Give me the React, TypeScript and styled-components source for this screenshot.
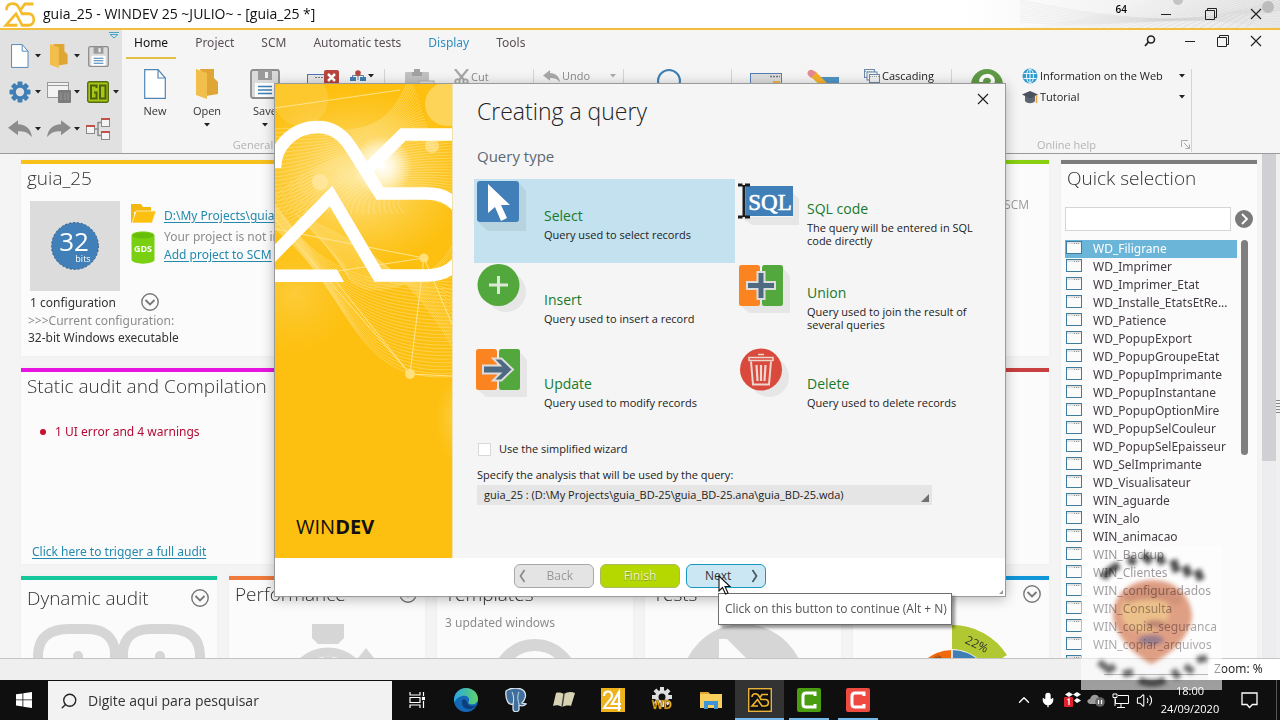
import React from "react";
import styled, { createGlobalStyle, css } from "styled-components";
import { Search, ChevronUp, Mic, Volume2 } from "lucide-react";

const ui = `"Open Sans", "Noto Sans", sans-serif`;
const dense = `"Noto Sans", "Open Sans", sans-serif`;

const Global = createGlobalStyle`
  * { box-sizing: border-box; }
  html, body { margin: 0; height: 100%; }
  body { font-family: ${ui}; font-size: 12px; color: #333; overflow: hidden; background: #f5f5f5; }
  button { font: inherit; color: inherit; background: none; border: 0; padding: 0; text-align: left; }
  h1, h2, p, ul { margin: 0; padding: 0; font-weight: 400; }
  ul { list-style: none; }
  svg { display: block; flex: none; }
`;

const Page = styled.div`
  position: relative;
  display: flex;
  flex-direction: column;
  height: 100vh;
`;

/* ---------- title bar ---------- */

const TitleBar = styled.header`
  display: flex;
  align-items: center;
  height: 30px;
  padding: 0 18px 0 3px;
  background: #fff;
  border-bottom: 2px solid #f3bd3f;
  position: relative;
`;

const TitleText = styled.h1`
  flex: 1;
  margin-left: 8px;
  font-size: 14px;
  line-height: 20px;
  color: #111;
`;

const TitleMesh = styled.div`
  position: absolute;
  right: 0;
  top: 0;
`;

const Bits = styled.span`
  position: relative;
  align-self: flex-start;
  margin: 1px 33px 0 0;
  font-size: 10px;
  line-height: 16px;
  font-weight: 600;
  color: #000;
`;

const WindowButtons = styled.div<{ $gap: number }>`
  position: relative;
  display: flex;
  align-items: center;
  gap: ${(p) => p.$gap}px;
  color: #222;
`;

const IconButton = styled.button`
  display: flex;
  align-items: center;
  justify-content: center;
`;

const Mirror = styled.span`
  display: flex;
  transform: scaleX(-1);
`;

/* ---------- ribbon ---------- */

const Ribbon = styled.div`
  display: flex;
  height: 124px;
  border-bottom: 1px solid #9a9a9a;
  background: #f5f5f5;
`;

const QuickTools = styled.div`
  position: relative;
  width: 122px;
  background: #e1e1e1;
  padding: 8px 2px 6px 8px;
  display: grid;
  grid-template-columns: 39px 39px 34px;
  grid-template-rows: repeat(3, 1fr);
  align-items: center;
`;

const QuickTool = styled.button`
  display: grid;
  grid-template-columns: 24px 6px;
  justify-items: center;
  align-items: center;
  gap: 3px;
`;

const PinMark = styled.span`
  position: absolute;
  right: 3px;
  top: 2px;
`;

const RibbonMain = styled.div`
  flex: 1;
  display: flex;
  flex-direction: column;
`;

const TabRow = styled.nav`
  display: flex;
  align-items: flex-start;
  padding: 0 18px 0 4px;
`;

const Tab = styled.a<{ $tone?: "active" | "link" }>`
  padding: 4px 8px 5px;
  margin-right: 11px;
  font-family: ${dense};
  font-size: 12px;
  line-height: 18px;
  text-decoration: none;
  color: ${(p) => (p.$tone === "active" ? "#111" : p.$tone === "link" ? "#2f8fc0" : "#5a4f55")};
  border-bottom: 2px solid ${(p) => (p.$tone === "active" ? "#e2c044" : "transparent")};
`;

const Spring = styled.div`
  flex: 1;
`;

const TabTools = styled.div`
  display: flex;
  align-items: center;
  height: 22px;
  gap: 28px;
`;

const GroupRow = styled.div`
  flex: 1;
  display: flex;
  padding-top: 10px;
`;

const Group = styled.section<{ $w: number }>`
  display: flex;
  flex-direction: column;
  width: ${(p) => p.$w}px;
  border-right: 1px solid #d4d4d4;
  margin-bottom: 1px;
`;

const GroupBody = styled.div<{ $pad?: number; $gap?: number }>`
  flex: 1;
  display: flex;
  align-items: flex-start;
  padding-left: ${(p) => p.$pad ?? 7}px;
  gap: ${(p) => p.$gap ?? 0}px;
`;

const GroupLabel = styled.div`
  text-align: center;
  color: #b4b4b4;
  font-size: 11px;
  line-height: 15px;
`;

const LabelRow = styled.div`
  position: relative;
  padding-right: 10px;
`;

const Launcher = styled.button`
  position: absolute;
  right: 1px;
  bottom: 3px;
`;

const ExtraTools = styled.div`
  display: flex;
  align-items: flex-start;
  gap: 11px;
  padding-left: 10px;
`;

const BigButton = styled.button<{ $w?: number }>`
  width: ${(p) => p.$w ?? 52}px;
  display: flex;
  flex-direction: column;
  align-items: center;
  gap: 3px;
  font-size: 11px;
  line-height: 18px;
  color: #333;
`;

const SmallButton = styled.button<{ $off?: boolean }>`
  display: flex;
  align-items: center;
  gap: 2px;
  min-height: 14px;
  font-size: 11px;
  line-height: 14px;
  white-space: nowrap;
  color: ${(p) => (p.$off ? "#8a8a8a" : "#222")};
`;

const HelpLinks = styled.div`
  flex: 1;
  display: flex;
  flex-direction: column;
  gap: 7px;
  padding-right: 6px;
`;

const HelpRow = styled.div`
  display: flex;
  align-items: center;
  justify-content: space-between;
`;

/* ---------- workspace ---------- */

const Workspace = styled.main`
  flex: 1;
  min-height: 0;
  display: flex;
  overflow: hidden;
  background: #f4f4f4;
`;

const Board = styled.div`
  flex: 1;
  display: grid;
  grid-template-columns: repeat(6, minmax(0, 1fr));
  grid-auto-rows: 196px;
  gap: 12px;
  padding: 6px 5px 0 21px;
`;

const Card = styled.section<{ $accent: string; $span?: number; $rows?: number }>`
  grid-column: span ${(p) => p.$span ?? 1};
  grid-row: span ${(p) => p.$rows ?? 1};
  display: flex;
  flex-direction: column;
  min-width: 0;
  overflow: hidden;
  background: #fbfbfb;
  border-top: 4px solid ${(p) => p.$accent};
  box-shadow: 0 0 3px #ececec;
  padding: 0 6px;
`;

const QuickCard = styled(Card)`
  grid-column: 6;
  grid-row: 1 / span 3;
  padding: 0 0 0 4px;
`;

const CardTitle = styled.h2`
  flex: 1;
  font-size: 19px;
  line-height: 28px;
  font-weight: 300;
  color: #333;
  white-space: nowrap;
`;

const CardHead = styled.div<{ $drop?: boolean; $inset?: boolean }>`
  display: flex;
  align-items: center;
  min-height: 28px;
  padding-top: ${(p) => (p.$drop ? 4 : 0)}px;
  padding-left: ${(p) => (p.$inset ? 2 : 0)}px;
  padding-right: 2px;
`;

const ProjectRow = styled.div`
  display: flex;
  gap: 11px;
  padding: 9px 0 0 3px;
`;

const ProjectTile = styled.div`
  width: 90px;
  height: 90px;
  background: #dcdcdc;
  display: flex;
  align-items: center;
  justify-content: center;
`;

const ProjectInfo = styled.div`
  display: grid;
  grid-template-columns: 24px auto;
  column-gap: 9px;
  align-content: start;
  padding-top: 3px;
`;

const InfoLines = styled.div`
  display: flex;
  flex-direction: column;
`;

const DataMark = styled.div`
  padding-top: 3px;
`;

const Line = styled.p<{ $soft?: boolean }>`
  font-family: ${dense};
  font-size: 12px;
  line-height: 17px;
  white-space: nowrap;
  color: ${(p) => (p.$soft ? "#8c8c8c" : "#333")};
`;

const Link = styled.a<{ $tall?: boolean }>`
  font-family: ${dense};
  font-size: 12px;
  line-height: ${(p) => (p.$tall ? 24 : 20)}px;
  color: #2389ae;
  white-space: nowrap;
  text-underline-offset: 2px;
`;

const ConfigHead = styled.div`
  display: flex;
  align-items: center;
  gap: 25px;
  padding-left: 3px;
  height: 20px;
  margin-top: 1px;
`;

const ConfigLines = styled.div`
  padding-left: 1px;
`;

const AuditNote = styled.p`
  display: flex;
  align-items: center;
  gap: 9px;
  padding: 22px 0 0 13px;
  font-family: ${dense};
  font-size: 12px;
  line-height: 20px;
  color: #b40a35;
  &::before {
    content: "";
    width: 6px;
    height: 6px;
    border-radius: 50%;
    background: #c8102e;
  }
`;

const CardFoot = styled.div`
  margin-top: auto;
  padding: 0 0 2px 5px;
`;

const UpdateNote = styled.div`
  padding: 6px 0 0 2px;
`;

const Ghost = styled.div<{ $top?: number }>`
  display: flex;
  justify-content: center;
  margin-top: ${(p) => p.$top ?? 16}px;
`;

const RightNote = styled.p`
  margin-top: 33px;
  padding-right: 14px;
  text-align: right;
  font-size: 12px;
  line-height: 16px;
  color: #9a9a9a;
`;

const QuickSearch = styled.div`
  display: flex;
  align-items: center;
  gap: 4px;
  padding: 15px 0 9px;
`;

const SearchBox = styled.input`
  flex: 1;
  min-width: 0;
  height: 24px;
  border: 1px solid #d5d5d5;
  background: #fff;
`;

const QuickList = styled.div`
  display: flex;
  align-items: flex-start;
  gap: 4px;
`;

const Items = styled.ul`
  flex: 1;
  min-width: 0;
`;

const Item = styled.li<{ $on?: boolean }>`
  display: flex;
  align-items: center;
  gap: 11px;
  height: 18px;
  padding: 0 4px 0 1px;
  font-family: ${dense};
  font-size: 12px;
  line-height: 18px;
  color: ${(p) => (p.$on ? "#fff" : "#443c44")};
  background: ${(p) => (p.$on ? "#6bb5d8" : "transparent")};
  svg { margin-bottom: 3px; }
  span { white-space: nowrap; }
`;

const ListThumb = styled.div`
  width: 7px;
  height: 215px;
  margin-right: 9px;
  border-radius: 4px;
  background: #7f7f7f;
`;

const PageScroll = styled.div`
  width: 14px;
  background: #ededef;
  &::before {
    content: "";
    display: block;
    height: 61%;
    background: #cfcfd4;
  }
`;

const Splitter = styled.div`
  width: 4px;
  display: flex;
  align-items: center;
  background: #f0f0f0;
  &::before {
    content: "";
    width: 4px;
    height: 13px;
    background: repeating-linear-gradient(#888 0 1px, transparent 1px 3px);
  }
`;

/* ---------- status bar and taskbar ---------- */

const StatusBar = styled.footer`
  display: flex;
  justify-content: flex-end;
  height: 22px;
  border-top: 1px solid #c4c4c4;
  background: #efefef;
`;

const ZoomField = styled.div`
  width: 72px;
  padding-left: 6px;
  background: #fff;
  font-size: 12px;
  line-height: 20px;
  color: #111;
`;

const ZoomRule = styled.div`
  width: 104px;
  height: 16px;
  border-bottom: 1px solid #555;
`;

const Taskbar = styled.div`
  display: flex;
  height: 40px;
  background: #0f0f0f;
  color: #fff;
`;

const Start = styled.button`
  width: 48px;
  display: flex;
  align-items: center;
  justify-content: center;
`;

const TaskSearch = styled.label`
  display: flex;
  align-items: center;
  gap: 10px;
  width: 344px;
  padding-left: 12px;
  margin-top: 1px;
  background: #f2f2f2;
  color: #222;
  input {
    flex: 1;
    min-width: 0;
    border: 0;
    padding: 0;
    background: none;
    font-family: ${ui};
    font-size: 14px;
    color: #333;
  }
  input::placeholder { color: #333; opacity: 1; }
`;

const TaskButton = styled.button<{ $open?: boolean; $front?: boolean }>`
  width: 49px;
  display: flex;
  align-items: center;
  justify-content: center;
  ${(p) => p.$front && css`background: #333;`}
  ${(p) => p.$open && css`
    background-image: linear-gradient(#76b9ed, #76b9ed);
    background-size: ${p.$front ? "100%" : "40px"} 2px;
    background-position: bottom center;
    background-repeat: no-repeat;
  `}
`;

const Tray = styled.div`
  display: flex;
  align-items: center;
  margin-left: auto;
  padding-right: 3px;
`;

const TrayIcon = styled.span`
  width: 24px;
  display: flex;
  justify-content: center;
`;

const Clock = styled.div`
  width: 66px;
  padding-left: 2px;
  text-align: center;
  font-size: 11px;
  line-height: 18px;
`;

const Notice = styled.button`
  width: 54px;
  height: 40px;
  display: flex;
  align-items: center;
  justify-content: center;
`;

const ShowDesktop = styled.span`
  width: 1px;
  height: 40px;
  background: #555;
`;

/* ---------- dialog ---------- */

const Overlay = styled.div`
  position: absolute;
  inset: 0 0 40px 0;
  display: flex;
  align-items: center;
  justify-content: center;
`;

const Dialog = styled.div`
  position: relative;
  width: 732px;
  border: 1px solid #9a9a9a;
  background: #fff;
  box-shadow: 0 2px 12px rgba(0, 0, 0, 0.28);
`;

const SizeGrip = styled.span`
  position: absolute;
  right: 2px;
  bottom: 2px;
`;

const DialogTop = styled.div`
  display: flex;
  height: 474px;
  background: #f5f5f5;
`;

const Art = styled.div`
  position: relative;
  width: 178px;
  border-right: 1px solid #f0e2b0;
  background: #fdc010;
`;

const Brand = styled.div`
  position: absolute;
  left: 21px;
  bottom: 17px;
  font-size: 20px;
  line-height: 28px;
  font-weight: 400;
  color: #111;
  b { font-weight: 700; }
`;

const DialogBody = styled.div`
  flex: 1;
  min-width: 0;
  padding: 7px 10px 0 21px;
`;

const DialogHead = styled.div`
  display: flex;
  align-items: flex-start;
  justify-content: space-between;
  padding: 0 6px 0 3px;
`;

const DialogClose = styled(IconButton)`
  padding-top: 2px;
  color: #222;
`;

const DialogTitle = styled.h2`
  font-size: 23px;
  line-height: 40px;
  font-weight: 300;
  color: #222;
`;

const SectionTitle = styled.p`
  padding: 13px 0 11px 3px;
  font-size: 15px;
  line-height: 24px;
  color: #5d6872;
`;

const Choices = styled.div`
  display: grid;
  grid-template-columns: 261px 1fr;
  column-gap: 2px;
  grid-auto-rows: 84px;
`;

const Choice = styled.button<{ $on?: boolean }>`
  display: flex;
  align-items: flex-start;
  gap: 14px;
  padding: 0 10px 0 2px;
  background: ${(p) => (p.$on ? "#c3e1ef" : "transparent")};
`;

const ChoiceText = styled.span`
  align-self: center;
  display: flex;
  flex-direction: column;
  padding-top: 3px;
`;

const ChoiceName = styled.span`
  font-size: 14px;
  line-height: 22px;
  color: #157a2c;
`;

const ChoiceInfo = styled.span`
  font-size: 11px;
  line-height: 13px;
  padding-top: 1px;
  color: #222;
`;

const CheckLine = styled.label`
  display: flex;
  align-items: center;
  gap: 8px;
  margin: 9px 0 0 4px;
  font-size: 11px;
  line-height: 18px;
  color: #222;
  input {
    appearance: none;
    width: 13px;
    height: 13px;
    margin: 0;
    border: 1px solid #d8d8d8;
    background: #fff;
  }
`;

const FieldLabel = styled.label`
  display: block;
  margin: 8px 0 0 3px;
  font-size: 11px;
  line-height: 18px;
  color: #222;
`;

const SelectWrap = styled.div`
  position: relative;
  width: 455px;
  margin: 1px 0 0 3px;
  &::after {
    content: "";
    position: absolute;
    right: 3px;
    bottom: 3px;
    border: 4px solid #707070;
    border-left-color: transparent;
    border-top-color: transparent;
  }
  select {
    appearance: none;
    display: block;
    width: 100%;
    height: 20px;
    padding: 0 20px 2px 7px;
    border: 0;
    border-radius: 0;
    background: #e5e5e5;
    font-family: ${ui};
    font-size: 11px;
    color: #222;
  }
`;

const DialogFoot = styled.div`
  display: flex;
  justify-content: center;
  gap: 6px;
  padding: 6px 0 8px;
`;

const FootButton = styled.button<{ $kind: "off" | "done" | "go" }>`
  position: relative;
  display: flex;
  align-items: center;
  justify-content: space-between;
  width: 80px;
  height: 24px;
  padding: 0 7px;
  border-radius: 6px;
  font-size: 12px;
  line-height: 20px;
  ${(p) => p.$kind === "off" && css`border: 1px solid #a8a8a8; background: #e4e4e4; color: #989898; padding: 0 20px 0 4px;`}
  ${(p) => p.$kind === "done" && css`border: 1px solid #a9b95c; background: #b5d900; color: #eef6b8; justify-content: center; text-shadow: 0 1px 1px #7f8f3a;`}
  ${(p) => p.$kind === "go" && css`border: 1px solid #1899bd; background: #cbe7f4; color: #333; padding-left: 18px;`}
`;

const Tooltip = styled.div`
  position: absolute;
  left: 31px;
  top: 28px;
  z-index: 2;
  padding: 6px 4px 6px 6px;
  border: 1px solid #6f6f6f;
  background: #fff;
  box-shadow: 3px 3px 3px rgba(0, 0, 0, 0.4);
  font-size: 12px;
  line-height: 18px;
  color: #555;
  white-space: nowrap;
`;

const Pointer = styled.span`
  position: absolute;
  left: 31px;
  top: 10px;
  z-index: 3;
`;

const Watermark = styled.div<{ $blend?: boolean }>`
  position: absolute;
  right: 58px;
  bottom: 30px;
  pointer-events: none;
  ${(p) => p.$blend && css`mix-blend-mode: multiply;`}
`;

/* ---------- drawings ---------- */

const LogoStrokes = () => (
  <g fill="none" stroke="#fff" strokeWidth="12.500">
    <path d="M0 84C0 61 19 43 43 43C57 43 67 50 75 62L105 109.500H152C206 109.500 206 191.500 152 191.500H103L56 112L-22 191.500" strokeMiterlimit="8" />
    <path d="M178 50.500H128L92 86" />
    <path d="M-5 185.500H62L69 198H-5Z" fill="#fff" stroke="none" />
  </g>
);

const Logo = ({ w, h, color }: { w: number; h: number; color: string }) => (
  <svg width={w} height={h} viewBox="-44 32 246 170" preserveAspectRatio="none">
    <g fill="none" stroke={color} strokeWidth="20">
      <path d="M-18 88C-18 56 4 43 34 43C56 43 67 52 75 66L103 112H152C206 112 206 190 152 190H103L56 112L-22 190H66" />
      <path d="M190 46H124L92 84" />
    </g>
  </svg>
);

const Caret = ({ color = "#222" }: { color?: string }) => (
  <svg width="6" height="4" viewBox="0 0 6 4"><path d="M0 0H6L3 3.500Z" fill={color} /></svg>
);

const CloseIcon = () => (
  <svg width="12" height="12" viewBox="0 0 12 12"><path d="M1 1L11 11M11 1L1 11" stroke="#222" strokeWidth="1.200" /></svg>
);

const MinIcon = () => (
  <svg width="12" height="12" viewBox="0 0 12 12"><path d="M1 6.500H11" stroke="#222" /></svg>
);

const RestoreIcon = () => (
  <svg width="12" height="12" viewBox="0 0 12 12" fill="none" stroke="#222">
    <path d="M.5 2.500H9.500V11.500H.5ZM2.500 2V.5H11.500V9.500H10" />
  </svg>
);

const FindIcon = () => (
  <svg width="12" height="12" viewBox="0 0 12 12" fill="none" stroke="#222">
    <circle cx="7" cy="4.500" r="3.500" strokeWidth="1.600" />
    <path d="M4.500 7L1 11" strokeWidth="1.800" />
  </svg>
);

const Angle = ({ left, color }: { left?: boolean; color: string }) => (
  <svg width="7" height="14" viewBox="0 0 7 14">
    <path d={left ? "M5.500 1L1.500 7L5.500 13" : "M1.500 1L5.500 7L1.500 13"} fill="none" stroke={color} strokeWidth="1.800" />
  </svg>
);

const FileIcon = ({ s = 1 }: { s?: number }) => (
  <svg width={22 * s} height={30 * s} viewBox="0 0 22 30">
    <path d="M.7.7H14L21.300 9V29.300H.7Z" fill="#fff" stroke="#4f86b5" strokeWidth="1.200" />
    <path d="M14 .7V9H21.300" fill="none" stroke="#4f86b5" strokeWidth="1.200" />
  </svg>
);

const OpenIcon = ({ s = 1 }: { s?: number }) => (
  <svg width={22 * s} height={30 * s} viewBox="0 0 22 30">
    <path d="M4 0H18V9L22 13V25L10 27Z" fill="#dfa535" />
    <path d="M0 0L11 4V30L0 26Z" fill="#f3bf4c" />
  </svg>
);

const SaveIcon = ({ s = 1 }: { s?: number }) => (
  <svg width={30 * s} height={30 * s} viewBox="0 0 30 30">
    <rect x="1" y="1" width="28" height="28" rx="2" fill="#dadada" stroke="#8c8c8c" strokeWidth="1.800" />
    <rect x="8" y="1" width="14" height="10" fill="#9a9a9a" />
    <rect x="15" y="3" width="3" height="6" fill="#eee" />
    <rect x="5" y="14" width="20" height="14" fill="#fff" />
    <path d="M8 17.500H22M8 21H22M8 24.500H22" stroke="#3f7fb5" strokeWidth="1.500" />
  </svg>
);

const GearIcon = () => (
  <svg width="24" height="24" viewBox="-12 -12 24 24">
    <g fill="#3f7fb5">
      {[0, 45, 90, 135].map((a) => (
        <rect key={a} x="-2.500" y="-10.500" width="5" height="21" rx="1" transform={`rotate(${a})`} />
      ))}
      <circle r="7.500" />
    </g>
    <circle r="4.200" fill="#e1e1e1" />
  </svg>
);

const WindowBlockIcon = () => (
  <svg width="24" height="22" viewBox="0 0 24 22">
    <rect x=".5" y="1.500" width="21" height="15" fill="#f2f2f2" stroke="#999" />
    <path d="M1 4.500H21" stroke="#999" />
    <rect x="11" y="9" width="13" height="13" rx="1" fill="#7c7c7c" />
    <path d="M14 12V19M18 12V19M21 12V19" stroke="#969696" />
  </svg>
);

const GoIcon = () => (
  <svg width="22" height="22" viewBox="0 0 22 22">
    <rect x=".7" y=".7" width="20.600" height="20.600" rx="2" fill="#a9c614" stroke="#566b10" strokeWidth="1.400" />
    <path d="M9.500 7V4.500H4V17.500H9.500V11.500H7M13 4.500H18.500V17.500H13Z" fill="none" stroke="#4d600e" strokeWidth="2" />
  </svg>
);

const UndoIcon = ({ w = 24, color = "#8c8c8c", flip }: { w?: number; color?: string; flip?: boolean }) => (
  <svg width={w} height={w * 0.72} viewBox="0 0 24 17">
    <path d="M10 0V4C18 4 23 9 24 17C20 12 16 11 10 11V15L0 7.500Z" fill={color} transform={flip ? "translate(24 0) scale(-1 1)" : undefined} />
  </svg>
);

const TreeIcon = () => (
  <svg width="24" height="24" viewBox="0 0 24 24" fill="#f4f4f4" stroke="#8a8a8a">
    <path d="M9 12H12M12 5V19M12 5.500H16M12 18.500H16" fill="none" strokeWidth="1.500" />
    <rect x=".5" y="8.500" width="8" height="8" />
    <rect x="15.500" y="1.500" width="8" height="8" />
    <rect x="15.500" y="14.500" width="8" height="8" />
    <path d="M0 9H9M15 2H24M15 15H24" stroke="#c4504a" strokeWidth="2" />
  </svg>
);

const DeleteWindowIcon = () => (
  <svg width="32" height="24" viewBox="0 0 32 24">
    <rect x=".5" y="5.500" width="26" height="18" fill="#e6e6e6" stroke="#4f74b5" />
    <path d="M8 8.500H16" stroke="#777" strokeDasharray="2 1" />
    <rect x="17" y="1" width="15" height="15" rx="2" fill="#b8453e" />
    <path d="M21 5L28 12M28 5L21 12" stroke="#fff" strokeWidth="2.500" />
  </svg>
);

const NodesIcon = () => (
  <svg width="16" height="14" viewBox="0 0 16 14">
    <path d="M8 4V11M2.500 9V6.500H13.500V9" fill="none" stroke="#6a7c90" />
    <circle cx="8" cy="4" r="2.800" fill="#b8453e" />
    <rect y="8" width="6" height="4" fill="#3f7fb5" />
    <rect x="10" y="8" width="6" height="4" fill="#3f7fb5" />
  </svg>
);

const PasteIcon = () => (
  <svg width="30" height="24" viewBox="0 0 30 24">
    <rect y="3" width="24" height="21" rx="1" fill="#c2c2c2" />
    <path d="M7 7V3H9V0H15V3H17V7Z" fill="#a2a2a2" />
    <rect x="14" y="12" width="15" height="12" fill="#e2e2e2" stroke="#b0b0b0" />
  </svg>
);

const ScissorsIcon = () => (
  <svg width="15" height="16" viewBox="0 0 15 16" fill="none" stroke="#a6a6a6" strokeWidth="2.200">
    <path d="M1 0L10 11M14 0L5 11" />
    <circle cx="3.500" cy="12.500" r="2.200" strokeWidth="1.800" />
    <circle cx="11.500" cy="12.500" r="2.200" strokeWidth="1.800" />
  </svg>
);

const CascadeIcon = () => (
  <svg width="16" height="14" viewBox="0 0 16 14" fill="#f2f2f2" stroke="#6a88aa">
    <rect x=".5" y=".5" width="10" height="8" />
    <rect x="3" y="3" width="10" height="8" />
    <rect x="5.500" y="5.500" width="10" height="8" />
    <path d="M1 2.500H10M6 7.500H15" stroke="#9a9a9a" strokeDasharray="1 1" />
  </svg>
);

const PropsIcon = () => (
  <svg width="32" height="24" viewBox="0 0 32 24">
    <rect x=".5" y="4.500" width="31" height="19" fill="#dedede" stroke="#557fb5" />
    <path d="M20 7.500H30" stroke="#777" strokeWidth="1.500" strokeDasharray="2 1" />
    <rect x="23" y="12" width="7" height="6" fill="#f0b440" />
  </svg>
);

const PencilIcon = () => (
  <svg width="32" height="24" viewBox="0 0 32 24">
    <rect x="12" y="8" width="20" height="14" fill="#4f94c4" />
    <path d="M3 7L8 2L24 18L19 22Z" fill="#f5b12c" />
    <path d="M1 6C-1 2 4-1 7 2L9 4L4 9Z" fill="#e58a90" />
  </svg>
);

const GlobeIcon = () => (
  <svg width="16" height="14" viewBox="0 0 16 14" overflow="visible">
    <circle cx="8" cy="7" r="7.500" fill="#2f9bd0" />
    <g fill="none" stroke="#e8f6fc">
      <ellipse cx="8" cy="7" rx="3.500" ry="7" />
      <path d="M1.500 4.500H14.500M1.500 9.500H14.500M8 0V14" />
    </g>
  </svg>
);

const CapIcon = () => (
  <svg width="16" height="13" viewBox="0 0 16 13">
    <path d="M3 5V10C5 13 11 13 13 10V5Z" fill="#5c6672" />
    <path d="M0 3.500L8 0L16 3.500L8 7.500Z" fill="#4a525e" />
    <path d="M14.500 4V12" stroke="#e5a83a" strokeWidth="1.500" />
  </svg>
);

const LauncherIcon = () => (
  <svg width="9" height="9" viewBox="0 0 9 9" fill="none" stroke="#aaa">
    <path d="M.5 7V.5H7M3 3L8 8M8.500 4.500V8.500H4.500" />
  </svg>
);

const ListWindow = () => (
  <svg width="16" height="13" viewBox="0 0 16 13">
    <rect x=".5" y=".5" width="15" height="12" fill="#fbfbfb" stroke="#3f7c9e" />
    <rect x="1" y="1" width="14" height="2" fill="#e2e2e2" />
    <path d="M8 2.500H14" stroke="#999" strokeDasharray="1 1" />
  </svg>
);

const RoundChevron = () => (
  <svg width="18" height="18" viewBox="0 0 18 18" fill="none" stroke="#777" strokeWidth="1.400">
    <circle cx="9" cy="9" r="8.200" />
    <path d="M4.500 7L9 11.500L13.500 7" strokeWidth="1.800" />
  </svg>
);

const CardChevron = () => <IconButton aria-label="Expand"><RoundChevron /></IconButton>;

const FolderIcon = () => (
  <svg width="25" height="19" viewBox="0 0 25 19">
    <path d="M0 0H10L12 3H20V8H0Z" fill="#f3b80f" />
    <path d="M0 3H3V19H0Z" fill="#f3b80f" />
    <path d="M5 7H25L21 19H1Z" fill="#fcc010" stroke="#fff3cc" strokeWidth=".8" />
  </svg>
);

const DatabaseIcon = () => (
  <svg width="24" height="33" viewBox="0 0 24 33">
    <path d="M.5 4.500C.5-1 23.500-1 23.500 4.500V28.500C23.500 34 .5 34 .5 28.500Z" fill="#78d010" />
    <ellipse cx="12" cy="4.500" rx="10.500" ry="3" fill="#68bd0a" />
    <text x="12" y="21" fontSize="9" fontWeight="700" fill="#fff" textAnchor="middle" fontFamily="Open Sans, sans-serif">GDS</text>
  </svg>
);

const BitsBadge = () => (
  <svg width="48" height="48" viewBox="0 0 48 48">
    <circle cx="24" cy="24" r="23.500" fill="#417fb8" stroke="#2b4d70" strokeDasharray="2 2" strokeWidth=".8" />
    <text x="23" y="29" fontSize="26" fill="#fff" textAnchor="middle" fontFamily="Open Sans, sans-serif">32</text>
    <text x="32" y="40" fontSize="9" fill="#fff" textAnchor="middle" fontFamily="Open Sans, sans-serif">bits</text>
  </svg>
);

const shade = "rgba(0,0,0,.06)";

const SelectIcon = () => (
  <svg width="54" height="56" viewBox="0 0 54 56">
    <path d="M3 44L43 4L50 12V52H12Z" fill={shade} />
    <rect x="1" y="2" width="42" height="41" rx="3" fill="#417fb8" />
    <path d="M12 5V34L19 28L25 42L31 39L25 26H34Z" fill="#fff" />
  </svg>
);

const SqlIcon = () => (
  <svg width="54" height="56" viewBox="3 0 54 56" overflow="visible">
    <path d="M4 38H57L57 14L63 20V46H16Z" fill={shade} />
    <rect x="10" y="7" width="47" height="30" fill="#417fb8" />
    <path d="M2 6H6.500M9 6H14M2 38H6.500M9 38H14M8 6V38" stroke="#1c1c1c" strokeWidth="3" />
    <text x="34" y="31" fontSize="23" fill="#fff" textAnchor="middle" stroke="#fff" strokeWidth=".6" fontFamily="Liberation Serif, serif">SQL</text>
  </svg>
);

const InsertIcon = () => (
  <svg width="54" height="56" viewBox="0 0 54 56">
    <circle cx="30" cy="29" r="20" fill={shade} />
    <circle cx="22.500" cy="22" r="21" fill="#52a83c" />
    <path d="M13 22H32M22.500 13V31" stroke="#dde8d8" strokeWidth="3" />
  </svg>
);

const PairBase = ({ children }: { children: React.ReactNode }) => (
  <svg width="54" height="56" viewBox="0 -1 54 56">
    <path d="M2 42L44 4L51 12V49H10Z" fill={shade} />
    <rect x="0" y="1" width="21" height="41" rx="2.500" fill="#fb8420" />
    <rect x="23" y="1" width="21" height="41" rx="2.500" fill="#52a83c" />
    {children}
  </svg>
);

const UpdateIcon = () => (
  <PairBase>
    <path d="M7 17.500H24L17 10.500H25.500L37 21.500L25.500 32.500H17L24 25.500H7Z" fill="#4e6a80" stroke="#dcdcdc" strokeWidth="2" />
  </PairBase>
);

const UnionIcon = () => (
  <PairBase>
    <path d="M18.500 8H25.500V18H36V25H25.500V35H18.500V25H8V18H18.500Z" fill="#4e6a80" stroke="#dcdcdc" strokeWidth="2" />
  </PairBase>
);

const TrashIcon = () => (
  <svg width="54" height="56" viewBox="0 -1 54 56">
    <circle cx="30" cy="29" r="20" fill={shade} />
    <circle cx="22" cy="21.500" r="21" fill="#d94a3c" />
    <g fill="none" stroke="#ecd6d0" strokeWidth="2">
      <path d="M10 9.500H34V12.500H10ZM19 6.500H25" strokeWidth="1.500" />
      <path d="M12 13.500L14 36.500H30L32 13.500" />
      <path d="M17.500 17L18.500 33M22 17V33M26.500 17L25.500 33" strokeWidth="2.200" />
    </g>
  </svg>
);

const mesh = Array.from({ length: 26 }, (_, i) => i);

const ArtDrawing = () => (
  <svg width="177" height="474" viewBox="0 0 177 474">
    <defs>
      <radialGradient id="haze"><stop offset="0" stopColor="#ffeeb0" stopOpacity=".85" /><stop offset="1" stopColor="#fddc70" stopOpacity="0" /></radialGradient>
      <radialGradient id="spark"><stop offset="0" stopColor="#fff" /><stop offset=".35" stopColor="#fffbe8" stopOpacity=".9" /><stop offset="1" stopColor="#fff" stopOpacity="0" /></radialGradient>
    </defs>
    <ellipse cx="80" cy="95" rx="110" ry="90" fill="url(#haze)" />
    <ellipse cx="20" cy="210" rx="60" ry="60" fill="url(#haze)" opacity=".3" />
    <ellipse cx="185" cy="335" rx="25" ry="45" fill="url(#haze)" opacity=".5" />
    <circle cx="26" cy="15" r="27" fill="#fff" opacity=".13" />
    <circle cx="172" cy="20" r="22" fill="#fff" opacity=".3" />
    <g fill="none" stroke="#fff3c4" strokeWidth=".7" opacity=".5">
      {mesh.map((i) => <path key={`a${i}`} d={`M0 ${45 + i * 4}C50 ${40 + i * 4} 110 ${70 - i * 2} ${135 + i} ${i * 3 - 10}`} />)}
      {mesh.map((i) => <path key={`b${i}`} d={`M${i * 6 - 20} 130C${30 + i * 3} ${80 + i} ${80 + i * 3} ${60 + i * 2} 177 ${50 + i * 3}`} />)}
      {mesh.map((i) => <path key={`c${i}`} d={`M0 ${120 + i}C${30 + i * 2} ${160 + i * 2} ${50 + i} ${200 + i * 4} 177 ${205 + i * 3.500}`} />)}
      {mesh.map((i) => <path key={`d${i}`} d={`M${20 + i * 2} ${130 + i * 2}C70 ${150 + i * 3} ${130 + i} ${180 + i} 177 ${262 - i * 4}`} />)}
    </g>
    <g fill="none" stroke="#ffe89a" strokeWidth=".9">
      <path d="M0 24L125 6M0 135L135 290L149 174L10 195M149 174L177 240M55 190L135 290L177 292M0 145L149 174" />
    </g>
    <circle cx="135" cy="290" r="5" fill="#ffe07a" />
    <circle cx="149" cy="174" r="4.500" fill="#ffe07a" />
    <circle cx="45" cy="98" r="8" fill="#ffe9a8" opacity=".7" />
    <circle cx="157" cy="62" r="7" fill="#ffe9a8" opacity=".6" />
    <circle cx="107" cy="82" r="30" fill="url(#spark)" />
    <LogoStrokes />
  </svg>
);

const TitleMeshDrawing = () => (
  <svg width="320" height="28" viewBox="0 0 320 28">
    <defs><linearGradient id="fade"><stop offset="0" stopColor="#fff" /><stop offset="1" stopColor="#e8e8e8" /></linearGradient></defs>
    <rect width="320" height="28" fill="url(#fade)" />
    <g fill="none" stroke="#c9c9c9" strokeWidth=".7">
      {mesh.map((i) => <path key={`u${i}`} d={`M${60 + i * 9} 28C${120 + i * 8} ${24 - i} ${190 + i * 4} ${i} ${200 + i * 6} -2`} opacity={0.1 + i * 0.025} />)}
      {mesh.slice(0, 12).map((i) => <path key={`v${i}`} d={`M60 ${i * 2}C160 ${20 + i} 240 ${30 - i * 2} 320 ${i * 3 - 2}`} opacity=".3" />)}
    </g>
    <circle cx="218" cy="0" r="5" fill="#c4c4c4" />
    <circle cx="308" cy="7" r="6" fill="#bcbcbc" />
  </svg>
);

const GlassesGhost = () => (
  <svg width="172" height="80" viewBox="0 0 172 80" fill="none" stroke="#d6d6d6" strokeWidth="10">
    <path d="M5 80V32C5 12 18 5 36 5H54C72 5 81 14 82 28V80M90 80V28C91 14 100 5 118 5H136C154 5 167 12 167 32V80" />
    <path d="M45 80V32M127 80V32" strokeLinecap="round" />
  </svg>
);

const StopwatchGhost = () => (
  <svg width="90" height="80" viewBox="0 0 90 80" fill="#d6d6d6" overflow="visible">
    <path d="M30 0H62V14L56 20H36L30 14Z" />
    <circle cx="46" cy="66" r="38" fill="none" stroke="#d6d6d6" strokeWidth="9" />
    <path d="M76 34L84 24L92 34L84 40Z" />
    <circle cx="46" cy="40" r="8" />
  </svg>
);

const RingGhost = () => (
  <svg width="90" height="90" viewBox="0 0 90 90" fill="none" stroke="#d6d6d6" strokeWidth="12">
    <circle cx="45" cy="45" r="38" />
  </svg>
);

const PlayGhost = () => (
  <svg width="124" height="90" viewBox="0 0 124 90">
    <circle cx="62" cy="62" r="62" fill="#d6d6d6" />
    <path d="M38 15H46L84 53H38Z" fill="#fbfbfb" />
  </svg>
);

const Donut = () => (
  <svg width="132" height="80" viewBox="-67 -66 132 80">
    <path d="M0-65A65 65 0 0 1 55-35L34-22A41 41 0 0 0 0-41Z" fill="#b2c832" />
    <path d="M0-40A40 40 0 0 0-40 0L0 0Z" fill="#f2690c" />
    <path d="M0-40A40 40 0 0 1 40 0L0 0Z" fill="#3f7fb5" />
    <path d="M0-41V10" stroke="#fff" strokeWidth="1.500" />
    <text x="0" y="0" fontSize="12" fill="#333" textAnchor="middle" transform="translate(23 -42) rotate(26)" fontFamily="Open Sans, sans-serif">22%</text>
    <text x="0" y="0" fontSize="9" fill="#333" textAnchor="middle" transform="translate(-12 -29) rotate(-35)" fontFamily="Open Sans, sans-serif">%</text>
  </svg>
);

const PointerArrow = () => (
  <svg width="14" height="20" viewBox="0 0 14 20">
    <path d="M1 1V16L4.500 12.500L7.500 19L10 18L7 11.500H12Z" fill="#fff" stroke="#111" strokeWidth="1.100" />
  </svg>
);

const VeilMark = () => (
  <svg width="141" height="144" viewBox="0 0 141 144">
    <defs>
      <linearGradient id="veil" x1="0" x2="0" y1="0" y2="1"><stop offset="0" stopColor="#fff" stopOpacity=".45" /><stop offset="1" stopColor="#fff" stopOpacity=".6" /></linearGradient>
    </defs>
    <rect width="141" height="144" fill="url(#veil)" />
  </svg>
);

const FaceMark = () => (
  <svg width="141" height="144" viewBox="0 0 141 144">
    <defs>
      <filter id="soft" x="-20%" y="-20%" width="140%" height="140%"><feGaussianBlur stdDeviation="2" /></filter>
    </defs>
    <g filter="url(#soft)" opacity=".85">
      <path d="M32 70C32 48 50 34 71 34C95 34 110 50 111 70C110 88 92 108 70 118C52 108 34 90 32 70Z" fill="#dc9070" />
      <ellipse cx="64" cy="66" rx="24" ry="20" fill="#ecb878" />
      <path d="M42 48C55 38 88 38 102 52L98 60C80 52 60 52 46 58Z" fill="#cc8264" />
      <ellipse cx="74" cy="78" rx="11" ry="4" fill="#b4705c" />
      <ellipse cx="70" cy="94" rx="13" ry="5" fill="#84667a" />
      <path d="M22 32C26 26 32 22 38 19M48 12L54 18M62 9L70 16M78 10L82 18M92 14L96 26M104 20L108 30M116 24L120 34" fill="none" stroke="#333" strokeWidth="8" />
      <path d="M18 116L28 124L34 120M42 128L52 126M58 134C66 138 76 138 84 134M92 124L98 132M104 120L112 126M116 114L126 112" fill="none" stroke="#555" strokeWidth="7" />
    </g>
  </svg>
);

/* taskbar icons */

const WindowsLogo = () => (
  <svg width="16" height="16" viewBox="0 0 16 16" fill="#fff">
    <path d="M0 2.300L6.500 1.400V7.500H0ZM7.300 1.300L16 0V7.500H7.300ZM0 8.300H6.500V14.500L0 13.600ZM7.300 8.300H16V16L7.300 14.700Z" />
  </svg>
);

const TaskViewIcon = () => (
  <svg width="16" height="16" viewBox="0 0 16 16" fill="none" stroke="#fff" strokeWidth="1.200">
    <path d="M1 0V3H11V0M1 16V13H11V16M1 5.500H11V10.500H1ZM14.500 0V4M14.500 9V16" />
    <rect x="13.500" y="5.500" width="2" height="2" fill="#fff" />
  </svg>
);

const EdgeIcon = () => (
  <svg width="24" height="24" viewBox="0 0 24 24">
    <defs><linearGradient id="edgeTop"><stop offset="0" stopColor="#2aa8e0" /><stop offset="1" stopColor="#5fd36a" /></linearGradient></defs>
    <circle cx="12" cy="12" r="12" fill="#1468b8" />
    <path d="M0 11C1 4 6 0 12 0C19 0 24 5 24 11C24 15 20 17 16 16C14 15.500 14 14 15 13C16 9 12 7 8 8C4 9 1 12 0 15Z" fill="url(#edgeTop)" />
    <path d="M8 13C7 18 11 22 17 21C20 20 22 18 23 17C18 19 14 18 13 14C12 11 9 10 8 13Z" fill="#0d3f7c" />
  </svg>
);

const ElephantIcon = () => (
  <svg width="24" height="24" viewBox="0 0 24 24">
    <path d="M3 3C8-1 17-1 21 3C24 7 22 12 19 15L23 16C21 18 18 18 16 17V22C14 25 10 24 10 21V16C6 18 2 12 3 3Z" fill="#3f6f9c" stroke="#d8e2ec" strokeWidth="1.300" />
    <path d="M9 4C11 8 11 12 10 16M16 4C14 8 15 13 16 16" stroke="#d8e2ec" fill="none" />
  </svg>
);

const BookIcon = () => (
  <svg width="24" height="18" viewBox="0 0 24 18">
    <path d="M4 2C7 1 10 2 12 3C15 1 19 0 23 2L19 15C16 14 12 15 10 16C7 14 4 14 1 15Z" fill="#d8d2b4" />
    <path d="M12 3L10 16" stroke="#444" strokeWidth="1.500" />
  </svg>
);

const Tile24 = () => (
  <svg width="24" height="24" viewBox="0 0 24 24">
    <rect width="24" height="24" fill="#edb21c" />
    <path d="M3 8C3 2 11 2 11 8C11 11 6 14 3 20H20M20 16H11L18 4V23" fill="none" stroke="#fff" strokeWidth="2.200" />
  </svg>
);

const WdIcon = () => (
  <svg width="24" height="28" viewBox="-12 -11 24 28">
    {[0, 45, 90, 135].map((a) => <rect key={a} x="-2" y="-10" width="4" height="20" fill="#dedede" transform={`rotate(${a})`} />)}
    <circle r="7" fill="#dedede" />
    <circle r="3.500" fill="#0f0f0f" />
    <text x="0" y="12" fontSize="12" fontWeight="700" textAnchor="middle" fill="#f5b81c" stroke="#6a4400" strokeWidth=".4" fontFamily="Open Sans, sans-serif">WD</text>
  </svg>
);

const ExplorerIcon = () => (
  <svg width="22" height="18" viewBox="0 0 22 18">
    <path d="M0 1H8L10 3H22V17H0Z" fill="#f8cf5c" />
    <path d="M0 1H8L10 3H0Z" fill="#e0a52c" />
    <path d="M4 10H18V18H14V14H8V18H4Z" fill="#3f94d8" />
  </svg>
);

const Tile25 = () => (
  <svg width="24" height="24" viewBox="0 0 24 24">
    <rect x=".7" y=".7" width="22.600" height="22.600" fill="#111" stroke="#e8b23a" strokeWidth="1.400" />
    <path d="M4 9C4 4.500 10 5 11.500 9L13 11.500H17C21.500 11.500 21.500 18 17 18H14L9.500 11.500L4 18H10M20 6.500H14L12 9.500" fill="none" stroke="#f2b52c" strokeWidth="1.600" />
  </svg>
);

const CamtasiaIcon = ({ color }: { color: string }) => (
  <svg width="24" height="24" viewBox="0 0 24 24">
    <rect width="24" height="24" rx="2" fill={color} />
    <path d="M18 8V5H9C7 5 6 6 6 8V16C6 18 7 19 9 19H18V16" fill="none" stroke="#fff" strokeWidth="3" />
  </svg>
);

const DropboxIcon = () => (
  <svg width="17" height="16" viewBox="0 0 17 16">
    <path d="M5 0L9 2.500L5 5L1 2.500ZM13 0L17 2.500L13 5L9 2.500ZM13 6L17 8.500L13 11L10 8.500Z" fill="#fff" />
    <rect y="5" width="9" height="10" rx="1" fill="#e0202c" />
    <path d="M3.500 8L5 7V13" stroke="#fff" strokeWidth="1.300" fill="none" />
  </svg>
);

const CloudIcon = () => (
  <svg width="18" height="14" viewBox="0 0 18 14">
    <path d="M3 11C-1 10 0 6 3 6C4 1 11 0 12 5C16 5 16 11 13 11Z" fill="#9a9a9a" />
    <circle cx="13" cy="9" r="4.800" fill="#666" />
    <path d="M11.500 7V11M14.500 7V11" stroke="#fff" strokeWidth="1.200" />
  </svg>
);

const NetworkIcon = () => (
  <svg width="17" height="15" viewBox="0 0 17 15" fill="none" stroke="#fff">
    <path d="M6 2.500H16.500V10.500H3.500V6M9 11V14M5 14.500H13M1 1H5V4.500H1ZM3 5V13" />
  </svg>
);

const NoticeIcon = () => (
  <svg width="17" height="17" viewBox="0 0 17 17" fill="none" stroke="#fff" strokeWidth="1.300">
    <path d="M1 1H16V12.500H11.500L8.500 15.500L6 12.500H1Z" />
  </svg>
);

/* ---------- data ---------- */

const tabs: { name: string; tone?: "active" | "link" }[] = [
  { name: "Home", tone: "active" },
  { name: "Project" },
  { name: "SCM" },
  { name: "Automatic tests" },
  { name: "Display", tone: "link" },
  { name: "Tools" },
];

const quickItems = [
  "WD_Filigrane", "WD_Imprimer", "WD_Imprimer_Etat", "WD_Installe_EtatsEtRe...", "WD_Patience", "WD_PopupExport",
  "WD_PopupGroupeEtat", "WD_PopupImprimante", "WD_PopupInstantane", "WD_PopupOptionMire", "WD_PopupSelCouleur",
  "WD_PopupSelEpaisseur", "WD_SelImprimante", "WD_Visualisateur", "WIN_aguarde", "WIN_alo", "WIN_animacao",
  "WIN_Backup", "WIN_Clientes", "WIN_configuradados", "WIN_Consulta", "WIN_copia_seguranca", "WIN_copiar_arquivos", "",
];

const choices = [
  { name: "Select", info: "Query used to select records", icon: <SelectIcon />, on: true },
  { name: "SQL code", info: "The query will be entered in SQL code directly", icon: <SqlIcon /> },
  { name: "Insert", info: "Query used to insert a record", icon: <InsertIcon /> },
  { name: "Union", info: "Query used to join the result of several queries", icon: <UnionIcon /> },
  { name: "Update", info: "Query used to modify records", icon: <UpdateIcon /> },
  { name: "Delete", info: "Query used to delete records", icon: <TrashIcon /> },
];

const quickTools = [
  { label: "New", icon: <FileIcon s={0.8} />, caret: true },
  { label: "Open", icon: <OpenIcon s={0.8} />, caret: true },
  { label: "Save", icon: <SaveIcon s={0.7} /> },
  { label: "Settings", icon: <GearIcon />, caret: true },
  { label: "Window", icon: <WindowBlockIcon />, caret: true },
  { label: "Run", icon: <GoIcon />, caret: true },
  { label: "Undo", icon: <UndoIcon />, caret: true },
  { label: "Redo", icon: <UndoIcon flip />, caret: true },
  { label: "Structure", icon: <TreeIcon /> },
];

const QueryDialog = () => (
  <Overlay>
    <Dialog role="dialog" aria-label="Creating a query">
      <DialogTop>
        <Art>
          <ArtDrawing />
          <Brand>WIN<b>DEV</b></Brand>
        </Art>
        <DialogBody>
          <DialogHead>
            <DialogTitle>Creating a query</DialogTitle>
            <DialogClose aria-label="Close"><CloseIcon /></DialogClose>
          </DialogHead>
          <SectionTitle>Query type</SectionTitle>
          <Choices>
            {choices.map((c) => (
              <Choice key={c.name} $on={c.on}>
                {c.icon}
                <ChoiceText>
                  <ChoiceName>{c.name}</ChoiceName>
                  <ChoiceInfo>{c.info}</ChoiceInfo>
                </ChoiceText>
              </Choice>
            ))}
          </Choices>
          <CheckLine><input type="checkbox" />Use the simplified wizard</CheckLine>
          <FieldLabel htmlFor="analysis">Specify the analysis that will be used by the query:</FieldLabel>
          <SelectWrap>
            <select id="analysis"><option>{"guia_25 : (D:\\My Projects\\guia_BD-25\\guia_BD-25.ana\\guia_BD-25.wda)"}</option></select>
          </SelectWrap>
        </DialogBody>
      </DialogTop>
      <DialogFoot>
        <FootButton $kind="off"><Angle left color="#8c8c8c" />Back</FootButton>
        <FootButton $kind="done">Finish</FootButton>
        <FootButton $kind="go">
          Next
          <Angle color="#4a5a64" />
          <Pointer><PointerArrow /></Pointer>
          <Tooltip role="tooltip">Click on this button to continue (Alt + N)</Tooltip>
        </FootButton>
      </DialogFoot>
      <SizeGrip><svg width="4" height="4" viewBox="0 0 4 4"><path d="M4 0V4H0Z" fill="#9a9a9a" /></svg></SizeGrip>
    </Dialog>
  </Overlay>
);

export default function App() {
  return (
    <Page>
      <Global />
      <TitleBar>
        <TitleMesh><TitleMeshDrawing /></TitleMesh>
        <Logo w={32} h={25} color="#f5bb2a" />
        <TitleText>guia_25 - WINDEV 25 ~JULIO~ - [guia_25 *]</TitleText>
        <Bits>64</Bits>
        <WindowButtons $gap={33}>
          <IconButton aria-label="Minimize"><MinIcon /></IconButton>
          <IconButton aria-label="Restore"><RestoreIcon /></IconButton>
          <IconButton aria-label="Close"><CloseIcon /></IconButton>
        </WindowButtons>
      </TitleBar>

      <Ribbon>
        <QuickTools>
          {quickTools.map((t) => (
            <QuickTool key={t.label} aria-label={t.label}>{t.icon}{t.caret && <Caret />}</QuickTool>
          ))}
          <PinMark>
            <svg width="10" height="7" viewBox="0 0 10 7" fill="none" stroke="#4aa3c8"><path d="M0 .5H10M1 2.500H9L5 6Z" /></svg>
          </PinMark>
        </QuickTools>
        <RibbonMain>
          <TabRow>
            {tabs.map((t) => <Tab key={t.name} href="#" $tone={t.tone}>{t.name}</Tab>)}
            <Spring />
            <TabTools>
              <IconButton aria-label="Search"><FindIcon /></IconButton>
              <WindowButtons $gap={21}>
                <IconButton aria-label="Minimize document"><MinIcon /></IconButton>
                <IconButton aria-label="Restore document"><RestoreIcon /></IconButton>
                <IconButton aria-label="Close document"><CloseIcon /></IconButton>
              </WindowButtons>
            </TabTools>
          </TabRow>
          <GroupRow>
            <Group $w={263}>
              <GroupBody>
                <BigButton><FileIcon />New</BigButton>
                <BigButton><OpenIcon />Open<Caret /></BigButton>
                <BigButton $w={64}><SaveIcon />Save<Caret /></BigButton>
                <ExtraTools>
                  <SmallButton aria-label="Close window"><DeleteWindowIcon /></SmallButton>
                  <SmallButton aria-label="Graph"><NodesIcon /><Caret /></SmallButton>
                </ExtraTools>
              </GroupBody>
              <GroupLabel>General</GroupLabel>
            </Group>
            <Group $w={149}>
              <GroupBody $pad={20} $gap={19}>
                <PasteIcon />
                <SmallButton $off><ScissorsIcon />Cut</SmallButton>
              </GroupBody>
            </Group>
            <Group $w={90}>
              <GroupBody $pad={9} $gap={20}>
                <SmallButton $off><UndoIcon w={17} color="#a8a8a8" />Undo</SmallButton>
                <SmallButton $off aria-label="Undo list"><Caret color="#aaa" /></SmallButton>
              </GroupBody>
            </Group>
            <Group $w={108}>
              <GroupBody $pad={32}>
                <svg width="26" height="26" viewBox="0 0 26 26"><circle cx="13" cy="12" r="11" fill="none" stroke="#3f7fb5" strokeWidth="2" /></svg>
              </GroupBody>
            </Group>
            <Group $w={220}>
              <GroupBody $pad={18} $gap={25}>
                <PropsIcon />
                <PencilIcon />
                <SmallButton><CascadeIcon />Cascading</SmallButton>
              </GroupBody>
            </Group>
            <Group $w={240}>
              <GroupBody $pad={19} $gap={19}>
                <svg width="32" height="32" viewBox="0 0 32 32"><circle cx="16" cy="16" r="16" fill="#5f9a45" /><path d="M10 13C10 5 22 5 22 12C22 16 16 16 16 21" fill="none" stroke="#fff" strokeWidth="4" /></svg>
                <HelpLinks>
                  <HelpRow><SmallButton><GlobeIcon />Information on the Web</SmallButton><Caret /></HelpRow>
                  <HelpRow><SmallButton><CapIcon />Tutorial</SmallButton><Caret /></HelpRow>
                </HelpLinks>
              </GroupBody>
              <LabelRow>
                <GroupLabel>Online help</GroupLabel>
                <Launcher aria-label="Online help options"><LauncherIcon /></Launcher>
              </LabelRow>
            </Group>
          </GroupRow>
        </RibbonMain>
      </Ribbon>

      <Workspace>
        <Board>
          <Card $accent="#f8c11c" $span={3}>
            <CardHead><CardTitle>guia_25</CardTitle></CardHead>
            <ProjectRow>
              <ProjectTile><BitsBadge /></ProjectTile>
              <ProjectInfo>
                <FolderIcon />
                <Link $tall href="#">{"D:\\My Projects\\guia_25\\guia_25.wdp"}</Link>
                <DataMark><DatabaseIcon /></DataMark>
                <InfoLines>
                  <Line $soft>Your project is not included in SCM</Line>
                  <Link href="#">Add project to SCM</Link>
                </InfoLines>
              </ProjectInfo>
            </ProjectRow>
            <ConfigHead><Line>1 configuration</Line><CardChevron /></ConfigHead>
            <ConfigLines>
              <Line $soft>&gt;&gt;&gt;Current configuration:</Line>
              <Line>32-bit Windows executable</Line>
            </ConfigLines>
          </Card>
          <Card $accent="#88d010" $span={2}><RightNote>SCM</RightNote></Card>
          <QuickCard $accent="#7c7c7c">
            <CardHead $inset><CardTitle>Quick selection</CardTitle></CardHead>
            <QuickSearch>
              <SearchBox aria-label="Quick selection" />
              <IconButton aria-label="Go">
                <svg width="18" height="18" viewBox="0 0 18 18"><circle cx="9" cy="9" r="9" fill="#7a7a7a" /><path d="M7 4L12 9L7 14" fill="none" stroke="#fff" strokeWidth="1.800" /></svg>
              </IconButton>
              <span />
            </QuickSearch>
            <QuickList>
              <Items>
                {quickItems.map((n, i) => <Item key={i} $on={i === 0}><ListWindow /><span>{n}</span></Item>)}
              </Items>
              <ListThumb />
            </QuickList>
          </QuickCard>

          <Card $accent="#e815e0" $span={3}>
            <CardHead><CardTitle>Static audit and Compilation</CardTitle></CardHead>
            <AuditNote>1 UI error and 4 warnings</AuditNote>
            <CardFoot><Link href="#">Click here to trigger a full audit</Link></CardFoot>
          </Card>
          <Card $accent="#c8403f" $span={2} />

          <Card $accent="#15c79b">
            <CardHead $drop><CardTitle>Dynamic audit</CardTitle><CardChevron /></CardHead>
            <Ghost $top={12}><GlassesGhost /></Ghost>
          </Card>
          <Card $accent="#ee7a3b">
            <CardHead><CardTitle>Performance</CardTitle><CardChevron /></CardHead>
            <Ghost><StopwatchGhost /></Ghost>
          </Card>
          <Card $accent="#8a5cc8">
            <CardHead $inset><CardTitle>Templates</CardTitle></CardHead>
            <UpdateNote><Line $soft>3 updated windows</Line></UpdateNote>
            <Ghost $top={7}><RingGhost /></Ghost>
          </Card>
          <Card $accent="#d8a020">
            <CardHead $inset><CardTitle>Tests</CardTitle></CardHead>
            <Ghost><PlayGhost /></Ghost>
          </Card>
          <Card $accent="#0f96d8">
            <CardHead><Spring /><CardChevron /></CardHead>
            <Ghost><Donut /></Ghost>
          </Card>
        </Board>
        <PageScroll />
        <Splitter />
      </Workspace>

      <StatusBar>
        <ZoomRule />
        <ZoomField>Zoom: %</ZoomField>
      </StatusBar>

      <Taskbar>
        <Start aria-label="Start"><WindowsLogo /></Start>
        <TaskSearch>
          <Mirror><Search size={18} strokeWidth={1.800} /></Mirror>
          <input placeholder="Digite aqui para pesquisar" aria-label="Pesquisar" />
        </TaskSearch>
        <TaskButton aria-label="Task view"><TaskViewIcon /></TaskButton>
        <TaskButton aria-label="Edge"><EdgeIcon /></TaskButton>
        <TaskButton aria-label="Database"><ElephantIcon /></TaskButton>
        <TaskButton aria-label="Reader"><BookIcon /></TaskButton>
        <TaskButton aria-label="Version 24"><Tile24 /></TaskButton>
        <TaskButton aria-label="WD"><WdIcon /></TaskButton>
        <TaskButton aria-label="Explorer"><ExplorerIcon /></TaskButton>
        <TaskButton aria-label="Version 25" $open $front><Tile25 /></TaskButton>
        <TaskButton aria-label="Camtasia" $open><CamtasiaIcon color="#4a9c10" /></TaskButton>
        <TaskButton aria-label="Recorder" $open><CamtasiaIcon color="#ee4a42" /></TaskButton>
        <Tray>
          <TrayIcon><ChevronUp size={18} strokeWidth={1.800} /></TrayIcon>
          <TrayIcon><Mic size={16} fill="#fff" /></TrayIcon>
          <TrayIcon><DropboxIcon /></TrayIcon>
          <TrayIcon><CloudIcon /></TrayIcon>
          <TrayIcon><NetworkIcon /></TrayIcon>
          <TrayIcon><Volume2 size={17} strokeWidth={1.500} /></TrayIcon>
          <Clock>18:00<br />24/09/2020</Clock>
          <Notice aria-label="Notifications"><NoticeIcon /></Notice>
          <ShowDesktop />
        </Tray>
      </Taskbar>

      <Watermark><VeilMark /></Watermark>
      <Watermark $blend><FaceMark /></Watermark>
      <QueryDialog />
    </Page>
  );
}
